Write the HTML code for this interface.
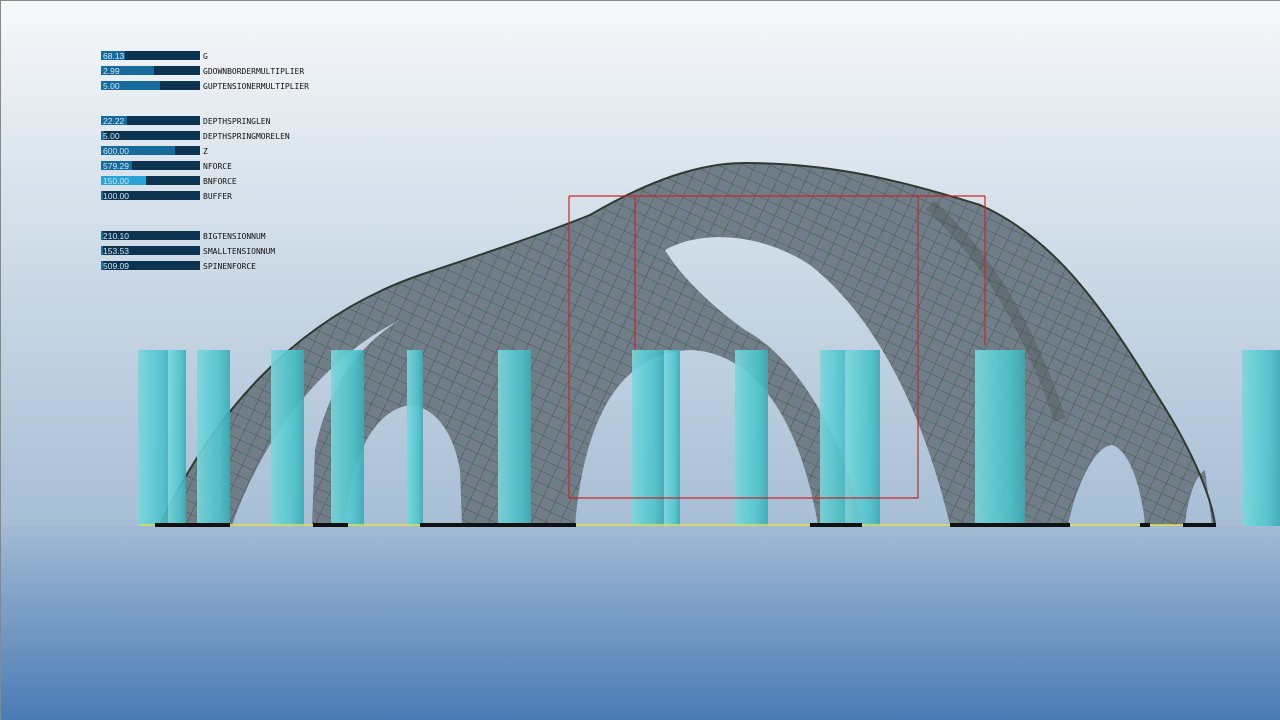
<!DOCTYPE html>
<html><head><meta charset="utf-8"><style>
html,body{margin:0;padding:0;width:1280px;height:720px;overflow:hidden}
svg{display:block}
.lb{font-family:"DejaVu Sans Mono","Liberation Mono",monospace;font-size:8px;fill:#111}
.vl{font-family:"Liberation Sans",sans-serif;font-size:8.5px;fill:#cfe6f5}
</style></head><body>
<svg width="1280" height="720" viewBox="0 0 1280 720" xmlns="http://www.w3.org/2000/svg">
<defs>
<linearGradient id="sky" x1="0" y1="0" x2="0" y2="1">
<stop offset="0" stop-color="#f7f8f9"/><stop offset="0.35" stop-color="#d9e3ec"/><stop offset="1" stop-color="#a7bed5"/></linearGradient>
<linearGradient id="gnd" x1="0" y1="0" x2="0" y2="1">
<stop offset="0" stop-color="#a3bad4"/><stop offset="1" stop-color="#4a7bb4"/></linearGradient>
<linearGradient id="cyl" x1="0" y1="0" x2="1" y2="0">
<stop offset="0" stop-color="#7fd6dc"/><stop offset="0.35" stop-color="#62cfd6"/><stop offset="0.7" stop-color="#4fc3cc"/><stop offset="1" stop-color="#3eaab4"/></linearGradient>
<pattern id="grid" width="13" height="11" patternUnits="userSpaceOnUse" patternTransform="rotate(25)">
<path d="M0 0H13M0 0V11" stroke="#1d2a22" stroke-width="1" fill="none"/>
<circle cx="0" cy="0" r="1.6" fill="#3a4a3a"/></pattern>
<pattern id="grn" width="22" height="22" patternUnits="userSpaceOnUse" patternTransform="rotate(-40)">
<path d="M0 0H22" stroke="#3fae4a" stroke-width="1" fill="none"/></pattern>
<path id="sh" fill-rule="evenodd" d="
M160,525 C210,420 290,320 420,275 C480,255 540,235 590,215 C650,180 700,163 745,163 C830,163 900,180 980,205 C1060,240 1110,320 1160,400 C1195,455 1212,500 1215,525 Z
M232,525 C262,440 320,360 400,320 C350,350 325,400 315,450 L312,525 Z
M345,525 C350,455 375,410 410,405 C440,408 455,440 460,470 L462,525 Z
M575,525 C585,410 625,352 690,350 C755,352 800,420 818,525 Z
M665,250 C700,230 760,232 810,265 C880,320 925,420 950,525 L862,525 C845,440 800,360 745,330 C710,305 680,275 665,250 Z
M1068,525 C1080,470 1100,445 1112,445 C1130,450 1142,490 1145,525 Z
M1185,525 C1188,495 1196,475 1205,470 L1212,525 Z"/>
</defs>
<rect width="1280" height="526" fill="url(#sky)"/>
<rect y="526" width="1280" height="194" fill="url(#gnd)"/>
<rect x="0" y="0" width="1280" height="1" fill="#888"/>
<rect x="0" y="0" width="1" height="720" fill="#888"/>

<use href="#sh" fill="#717d89"/>
<use href="#sh" fill="url(#grid)" opacity="0.5"/>
<use href="#sh" fill="url(#grn)" opacity="0.5"/>
<path d="M930,205 C990,260 1030,330 1060,420" stroke="#3f4a44" stroke-width="12" fill="none" opacity="0.3"/>
<path d="M160,525 C210,420 290,320 420,275 C480,255 540,235 590,215 C650,180 700,163 745,163 C830,163 900,180 980,205 C1060,240 1110,320 1160,400 C1195,455 1212,500 1215,525" stroke="#2e3a30" stroke-width="2" fill="none"/>

<g opacity="0.9">
<rect x="138" y="350" width="34" height="176" fill="url(#cyl)"/>
<rect x="168" y="350" width="18" height="176" fill="url(#cyl)"/>
<rect x="197" y="350" width="33" height="176" fill="url(#cyl)"/>
<rect x="271" y="350" width="33" height="176" fill="url(#cyl)"/>
<rect x="331" y="350" width="33" height="176" fill="url(#cyl)"/>
<rect x="407" y="350" width="16" height="176" fill="url(#cyl)"/>
<rect x="498" y="350" width="33" height="176" fill="url(#cyl)"/>
<rect x="632" y="350" width="32" height="176" fill="url(#cyl)"/>
<rect x="664" y="350" width="16" height="176" fill="url(#cyl)"/>
<rect x="735" y="350" width="33" height="176" fill="url(#cyl)"/>
<rect x="820" y="350" width="32" height="176" fill="url(#cyl)"/>
<rect x="845" y="350" width="35" height="176" fill="url(#cyl)"/>
<rect x="975" y="350" width="50" height="176" fill="url(#cyl)"/>
<rect x="1242" y="350" width="38" height="176" fill="url(#cyl)"/>
</g>

<g stroke="#c8282a" stroke-width="1.2" fill="none">
<path d="M569,196H985M569,196V498H918V196M635,196V350M985,196V345"/>
</g>
<path d="M140,525H1215" stroke="#e5e04a" stroke-width="1.5"/>
<g fill="#111">
<rect x="155" y="523" width="75" height="4"/><rect x="313" y="523" width="35" height="4"/>
<rect x="420" y="523" width="156" height="4"/><rect x="810" y="523" width="52" height="4"/>
<rect x="950" y="523" width="120" height="4"/><rect x="1140" y="523" width="10" height="4"/>
<rect x="1183" y="523" width="33" height="4"/></g>

<g>
<rect x="101" y="51" width="99" height="9" fill="#0c3450"/><rect x="101" y="51" width="24" height="9" fill="#176a9c"/>
<rect x="101" y="66" width="99" height="9" fill="#0c3450"/><rect x="101" y="66" width="53" height="9" fill="#176a9c"/>
<rect x="101" y="81" width="99" height="9" fill="#0c3450"/><rect x="101" y="81" width="59" height="9" fill="#176a9c"/>
<rect x="101" y="116" width="99" height="9" fill="#0c3450"/><rect x="101" y="116" width="26" height="9" fill="#176a9c"/>
<rect x="101" y="131" width="99" height="9" fill="#0c3450"/><rect x="101" y="131" width="3" height="9" fill="#176a9c"/>
<rect x="101" y="146" width="99" height="9" fill="#0c3450"/><rect x="101" y="146" width="74" height="9" fill="#176a9c"/>
<rect x="101" y="161" width="99" height="9" fill="#0c3450"/><rect x="101" y="161" width="31" height="9" fill="#176a9c"/>
<rect x="101" y="176" width="99" height="9" fill="#0c3450"/><rect x="101" y="176" width="45" height="9" fill="#29a3d6"/>
<rect x="101" y="191" width="99" height="9" fill="#0c3450"/><rect x="101" y="191" width="2" height="9" fill="#176a9c"/>
<rect x="101" y="231" width="99" height="9" fill="#0c3450"/><rect x="101" y="231" width="2" height="9" fill="#176a9c"/>
<rect x="101" y="246" width="99" height="9" fill="#0c3450"/><rect x="101" y="246" width="2" height="9" fill="#176a9c"/>
<rect x="101" y="261" width="99" height="9" fill="#0c3450"/><rect x="101" y="261" width="2" height="9" fill="#176a9c"/>
</g>
<g class="vl">
<text x="103" y="59">68.13</text><text x="103" y="74">2.99</text><text x="103" y="89">5.00</text>
<text x="103" y="124">22.22</text><text x="103" y="139">5.00</text><text x="103" y="154">600.00</text>
<text x="103" y="169">579.29</text><text x="103" y="184">150.00</text><text x="103" y="199">100.00</text>
<text x="103" y="239">210.10</text><text x="103" y="254">153.53</text><text x="103" y="269">509.09</text>
</g>
<g class="lb">
<text x="203" y="59">G</text><text x="203" y="74">GDOWNBORDERMULTIPLIER</text><text x="203" y="89">GUPTENSIONERMULTIPLIER</text>
<text x="203" y="124">DEPTHSPRINGLEN</text><text x="203" y="139">DEPTHSPRINGMORELEN</text><text x="203" y="154">Z</text>
<text x="203" y="169">NFORCE</text><text x="203" y="184">BNFORCE</text><text x="203" y="199">BUFFER</text>
<text x="203" y="239">BIGTENSIONNUM</text><text x="203" y="254">SMALLTENSIONNUM</text><text x="203" y="269">SPINENFORCE</text>
</g>
</svg>
</body></html>
